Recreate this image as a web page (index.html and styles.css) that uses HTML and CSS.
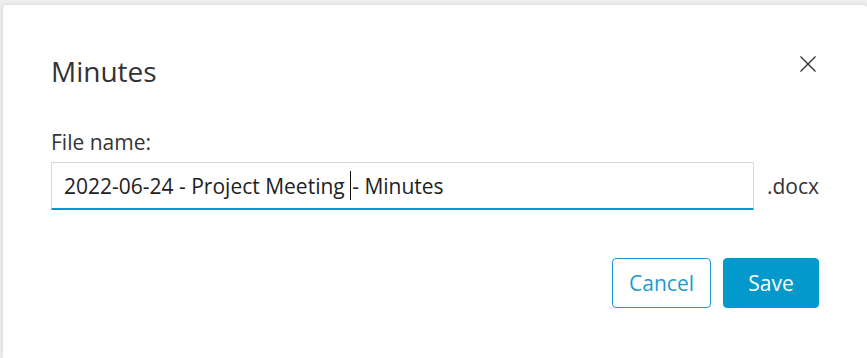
FILE: index.html
```html
<!DOCTYPE html>
<html lang="en">
<head>
  <meta charset="UTF-8">
  <meta name="viewport" content="width=device-width, initial-scale=1">
  <title>Minutes</title>
  <link rel="stylesheet" href="styles.css">
</head>
<body>

<div class="dialog">
  <div class="dialog-header">
    <h2>Minutes</h2>
    <button class="close-btn" aria-label="Close">
      <svg width="16" height="16" viewBox="0 0 16 16">
        <path d="M0.5 0.5 L15.5 15.5 M15.5 0.5 L0.5 15.5" stroke="#333" stroke-width="1.4" fill="none"/>
      </svg>
    </button>
  </div>

  <label class="field-label">File name:</label>
  <div class="field-row">
    <div class="text-input">2022-06-24 - Project Meeting <span class="caret"></span>- Minutes</div>
    <span class="ext">.docx</span>
  </div>

  <div class="actions">
    <button class="btn btn-outline">Cancel</button>
    <button class="btn btn-primary">Save</button>
  </div>
</div>

</body>
</html>
```

FILE: styles.css
```css
body {
  font-family: "Open Sans", Arial, sans-serif;
  background-color: #eeeeee;
  margin: 0;
  padding: 0;
  overflow: hidden;
}
.dialog {
  box-sizing: border-box;
  background: white;
  margin: 5px 0 0 3px;
  padding: 47px 48px 0 48px;
  border-radius: 4px 4px 0 0;
  box-shadow: 0 0 4px rgba(0,0,0,0.12);
  height: calc(100vh - 5px);
}
.dialog-header {
  display: flex;
  justify-content: space-between;
  align-items: flex-start;
}
.dialog-header h2 {
  margin: 0;
  font-size: 28px;
  font-weight: normal;
  color: #333;
}
.close-btn {
  background: none;
  border: none;
  padding: 0;
  margin: 4px 3px 0 0;
  width: 16px;
  height: 16px;
  cursor: pointer;
}
.close-btn svg {
  display: block;
}
.field-label {
  display: block;
  margin-top: 38px;
  font-size: 21px;
  color: #333;
}
.field-row {
  display: flex;
  align-items: center;
  gap: 13px;
  margin-top: 6px;
}
.text-input {
  flex: 1;
  box-sizing: border-box;
  height: 48px;
  padding: 0 12px;
  border: 1px solid #d9d9d9;
  border-bottom: 2px solid #0399cc;
  font-size: 21px;
  color: #222;
  display: flex;
  align-items: center;
  white-space: pre;
}
.caret {
  display: inline-block;
  width: 1px;
  height: 29px;
  background: #111;
  margin-right: 1px;
}
.ext {
  font-size: 21px;
  color: #333;
}
.actions {
  display: flex;
  justify-content: flex-end;
  gap: 12px;
  margin-top: 48px;
}
.btn {
  font-family: "Open Sans", Arial, sans-serif;
  font-size: 21px;
  height: 50px;
  min-width: 96px;
  padding: 0 16px;
  border-radius: 4px;
  cursor: pointer;
}
.btn-outline {
  background: white;
  color: #1c9bcf;
  border: 1px solid #1c9bcf;
}
.btn-primary {
  background: #0399cc;
  color: white;
  border: 1px solid #0399cc;
}
```
